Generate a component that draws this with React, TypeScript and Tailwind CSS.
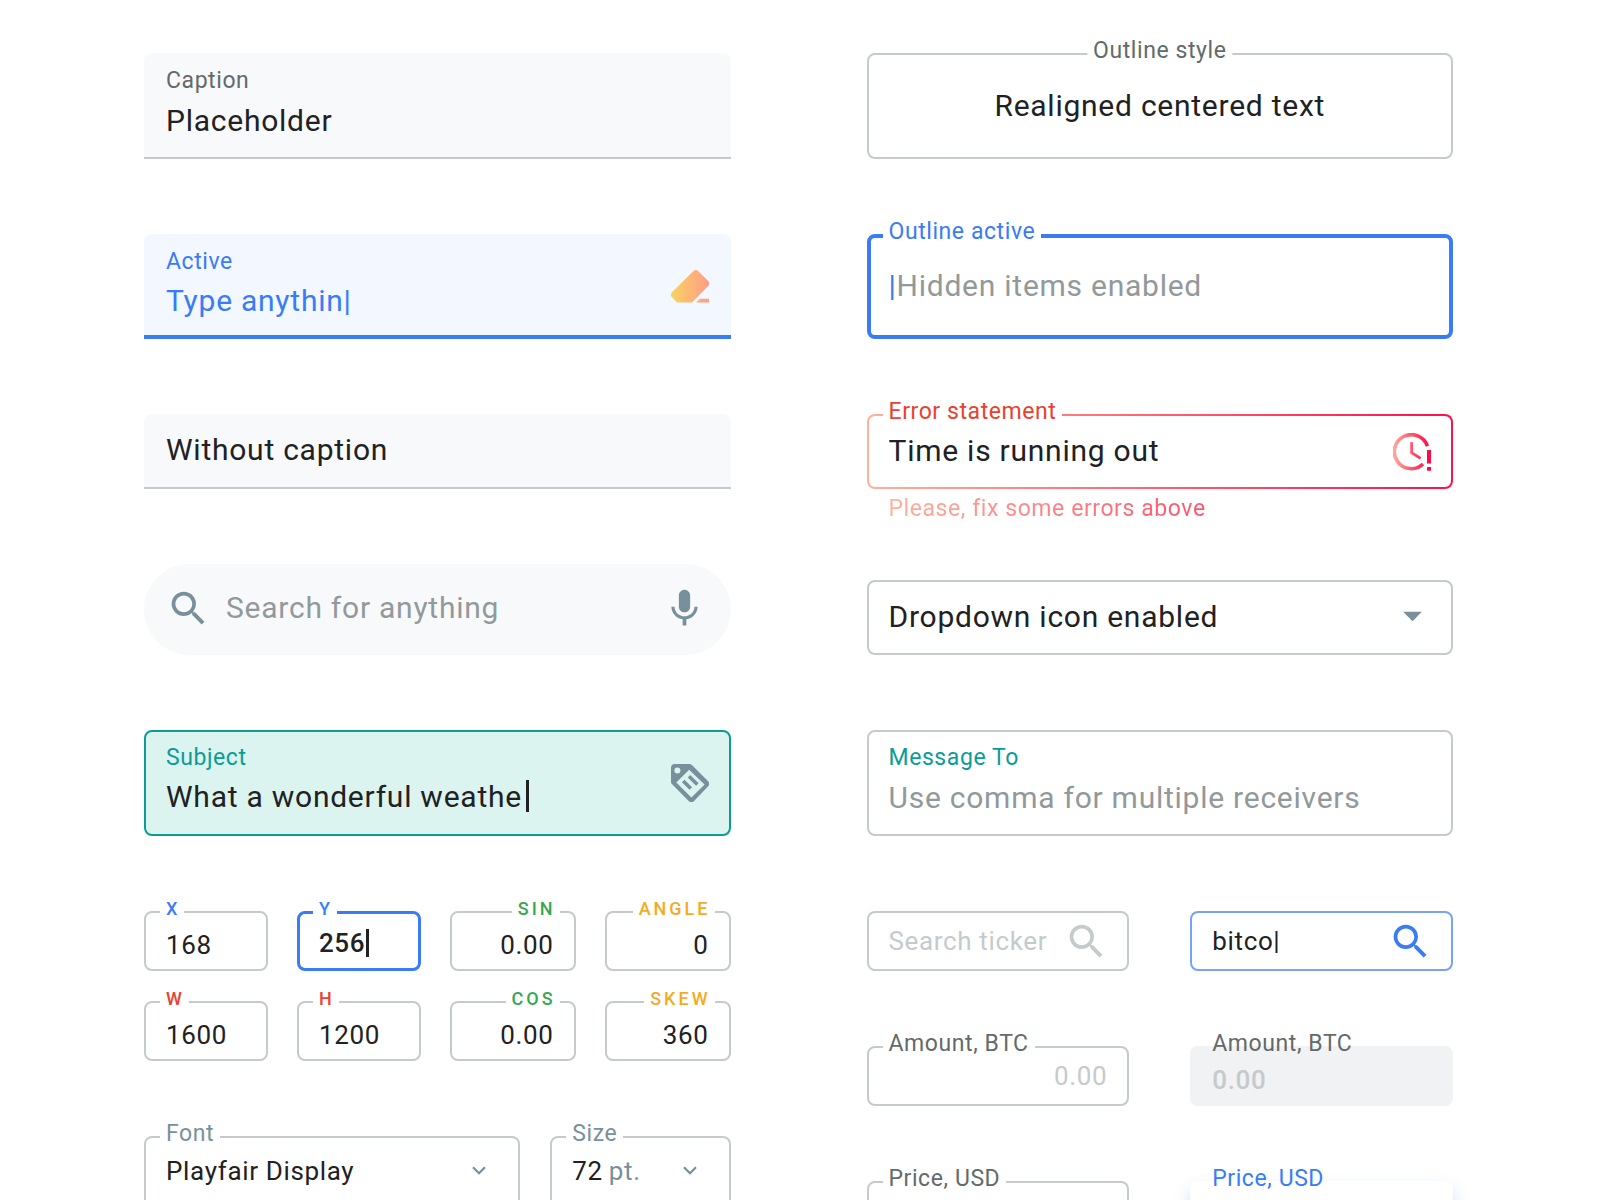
import React from 'react';
import clsx from 'clsx';
import { MdArrowDropDown, MdSearch } from 'react-icons/md';

type Tone = 'gray' | 'blue' | 'red' | 'green' | 'amber' | 'teal' | 'slate';

const toneClass: Record<Tone, string> = {
  gray: 'text-[#636a6b]',
  blue: 'text-[#397cf6]',
  red: 'text-[#ea4030]',
  green: 'text-[#34a853]',
  amber: 'text-[#f3ac1f]',
  teal: 'text-[#0b9c97]',
  slate: 'text-[#78909c]'
};

const largeInput =
  'h-10 w-full min-w-0 bg-transparent pb-0.5 text-[30px] leading-[38px] tracking-wide text-[#212123] outline-none placeholder:text-[#92999b] placeholder:opacity-100';
const smallInput =
  'h-8 w-full min-w-0 bg-transparent text-[26px] leading-8 tracking-wide text-[#212123] outline-none placeholder:text-[#c5cacd] placeholder:opacity-100';
const innerLabel = 'block text-[23px] leading-7 tracking-wide';
const outline = 'rounded-lg border-2 border-[#c5cacd]';

interface OutlineLabelProps {
  htmlFor: string;
  tone?: Tone;
  align?: 'left' | 'center' | 'right';
  small?: boolean;
  clear?: boolean;
  children: React.ReactNode;
}

// Sits on top of the border and hides the part of it behind the text
const OutlineLabel: React.FC<OutlineLabelProps> = ({ htmlFor, tone = 'gray', align = 'left', small, clear, children }) => (
  <label
    htmlFor={htmlFor}
    className={clsx(
      'absolute -top-3.5 z-10 pl-1.5 leading-6 whitespace-nowrap',
      small ? 'pr-1 text-lg font-medium tracking-[3px]' : 'pr-1.5 text-[23px] tracking-wide',
      align === 'left' && 'left-4',
      align === 'right' && 'right-4',
      align === 'center' && 'left-1/2 -translate-x-1/2',
      !clear && 'bg-white',
      toneClass[tone]
    )}
  >
    {children}
  </label>
);

const EraserIcon = () => (
  <svg viewBox="0 0 38 34" className="h-[34px] w-[38px] shrink-0">
    <defs>
      <linearGradient id="eraser" x1="0" y1="0" x2="1" y2="0">
        <stop offset="0" stopColor="#f9d35f" />
        <stop offset="1" stopColor="#ff9c89" />
      </linearGradient>
    </defs>
    <path
      fill="url(#eraser)"
      d="M22 1.4a4 4 0 0 1 5.6 0l9.3 9.3a4 4 0 0 1 0 5.6L21 32.6H6L1.2 27.6a4 4 0 0 1 0-5.6ZM29 28.8h9v3.8H25.2Z"
    />
  </svg>
);

const TagIcon = () => (
  <svg viewBox="0 0 38 38" className="size-[38px] shrink-0 text-[#78909c]">
    <path
      fill="currentColor"
      fillRule="evenodd"
      d="M3.8 0h14.4c1 0 2 .4 2.7 1.1l16 16a3.8 3.8 0 0 1 0 5.4L23.1 36.9a3.8 3.8 0 0 1-5.4 0L1.1 20.3A3.8 3.8 0 0 1 0 17.6V3.8A3.8 3.8 0 0 1 3.8 0ZM6.4 3.5a3 3 0 1 0 0 6 3 3 0 0 0 0-6ZM18.1 5.7 5.3 18.5l15.1 15.1 13.2-13.2Z"
    />
    <path stroke="currentColor" strokeWidth="3.6" d="m12.2 17 7.6 7.6M18 12.2l8.4 8.4" />
  </svg>
);

const ClockAlertIcon = () => (
  <svg viewBox="0 0 38 38" fill="none" className="size-[38px] shrink-0">
    <defs>
      <linearGradient id="clock" gradientUnits="userSpaceOnUse" x1="0" y1="0" x2="38" y2="0">
        <stop offset="0" stopColor="#ffab9b" />
        <stop offset="1" stopColor="#ff0040" />
      </linearGradient>
    </defs>
    <g stroke="url(#clock)">
      <path strokeWidth="3.6" d="M34.4 13.2A17 17 0 1 0 30 31" />
      <path strokeWidth="2.8" d="M18.6 9.2v10.6l9 5.6" />
    </g>
    <path fill="#ff0a47" d="M34 17h4v13.6h-4zM34 34h4v3.8h-4z" />
  </svg>
);

const Chevron = () => (
  <svg viewBox="0 0 14 9" fill="none" className="pointer-events-none h-[9px] w-3.5 shrink-0 text-[#78909c]">
    <path stroke="currentColor" strokeWidth="2.2" d="m1 1.2 6 6 6-6" />
  </svg>
);

interface NumberFieldProps {
  id: string;
  label: string;
  value: string;
  tone: Tone;
  align?: 'left' | 'right';
}

const NumberField: React.FC<NumberFieldProps> = ({ id, label, value, tone, align = 'left' }) => (
  <div className="relative">
    <OutlineLabel htmlFor={id} tone={tone} align={align} small>{label}</OutlineLabel>
    <div className={clsx(outline, 'flex h-15 items-center px-5 pt-2')}>
      <input id={id} defaultValue={value} className={clsx(smallInput, align === 'right' && 'text-right')} />
    </div>
  </div>
);

const App: React.FC = () => {
  return (
    <main className="h-screen overflow-hidden bg-white pt-[53px] pr-[147px] pl-36 font-[Roboto,sans-serif]">
      <div className="grid grid-cols-2 gap-x-[136px] gap-y-[75px]">
        <div className="h-[106px] rounded-t-lg border-b-2 border-[#c5c8cc] bg-[#f8f9fb] px-[22px] pt-3.5">
          <label htmlFor="caption" className={clsx(innerLabel, 'mb-1.5 text-[#636a6b]')}>Caption</label>
          <input id="caption" defaultValue="Placeholder" className={clsx(largeInput, 'block')} />
        </div>

        <div className="relative">
          <OutlineLabel htmlFor="outline-style" align="center">Outline style</OutlineLabel>
          <div className={clsx(outline, 'flex h-[106px] items-center px-5')}>
            <input id="outline-style" defaultValue="Realigned centered text" className={clsx(largeInput, 'text-center')} />
          </div>
        </div>

        <div className="flex h-[105px] items-center rounded-t-lg border-b-4 border-[#397cf6] bg-[#f3f7ff] px-[22px]">
          <div className="flex-1 self-start pt-3.5">
            <label htmlFor="active" className={clsx(innerLabel, 'mb-1 text-[#397cf6]')}>Active</label>
            <input
              id="active"
              defaultValue="Type anythin|"
              className="block h-10 w-full bg-transparent text-[30px] tracking-wide text-[#397cf6] outline-none"
            />
          </div>
          <button type="button" aria-label="Clear" className="mt-1"><EraserIcon /></button>
        </div>

        <div className="relative">
          <OutlineLabel htmlFor="outline-active" tone="blue">Outline active</OutlineLabel>
          <div className="flex h-[105px] items-center rounded-lg border-4 border-[#397cf6] px-[18px]">
            <span className="h-10 text-[30px] leading-[38px] tracking-wide text-[#397cf6]">|</span>
            <input id="outline-active" placeholder="Hidden items enabled" className={largeInput} />
          </div>
        </div>

        <div className="flex h-[75px] items-center rounded-t-lg border-b-2 border-[#c5c8cc] bg-[#f8f9fb] px-[22px]">
          <input aria-label="Without caption" defaultValue="Without caption" className={largeInput} />
        </div>

        <div className="relative">
          <OutlineLabel htmlFor="error" tone="red">Error statement</OutlineLabel>
          <div className="flex h-[75px] items-center rounded-lg border-2 border-transparent px-5 [background:linear-gradient(#fff,#fff)_padding-box,linear-gradient(90deg,#ffb19b,#ff0f4b)_border-box]">
            <input id="error" aria-describedby="error-help" defaultValue="Time is running out" className={largeInput} />
            <ClockAlertIcon />
          </div>
          <p
            id="error-help"
            className="absolute inset-x-[22px] top-full mt-1.5 bg-[linear-gradient(90deg,#ffb19b,#ff0f4b)] bg-clip-text text-[23px] leading-7 tracking-wide text-transparent"
          >
            Please, fix some errors above
          </p>
        </div>

        <div className="flex h-[91px] items-center gap-[15px] rounded-full bg-[#f8f9fb] pr-6 pb-0.5 pl-[22px] text-[#78909c]">
          <MdSearch className="size-[45px] shrink-0" />
          <input aria-label="Search" placeholder="Search for anything" className={largeInput} />
          <button type="button" aria-label="Voice search">
            <svg viewBox="0 0 24 24" fill="currentColor" className="size-[45px]">
              <path d="M12 14c1.66 0 3-1.34 3-3V5c0-1.66-1.34-3-3-3S9 3.34 9 5v6c0 1.66 1.34 3 3 3zm5.3-3c0 3-2.54 5.1-5.3 5.1S6.7 14 6.7 11H5c0 3.41 2.72 6.23 6 6.72V21h2v-3.28c3.28-.48 6-3.3 6-6.72h-1.7z" />
            </svg>
          </button>
        </div>

        <div className={clsx(outline, 'flex h-[75px] items-center self-end pr-4 pl-5')}>
          <select aria-label="Dropdown" className={clsx(largeInput, 'appearance-none')}>
            <option>Dropdown icon enabled</option>
          </select>
          <MdArrowDropDown className="pointer-events-none mb-1 size-[45px] shrink-0 text-[#78909c]" />
        </div>

        <div className="flex h-[106px] items-center rounded-lg border-2 border-[#0b9c97] bg-[#dbf4f0] px-5">
          <div className="flex-1 self-start pt-3">
            <label htmlFor="subject" className={clsx(innerLabel, 'mb-1 text-[#0b9c97]')}>Subject</label>
            <div className="flex items-center">
              <input
                id="subject"
                defaultValue="What a wonderful weathe"
                className="field-sizing-content h-10 bg-transparent text-[30px] tracking-wide text-[#212123] outline-none"
              />
              <span className="ml-1 h-8 w-[3px] bg-[#212123]" />
            </div>
          </div>
          <TagIcon />
        </div>

        <div className={clsx(outline, 'h-[106px] px-5 pt-3')}>
          <label htmlFor="message-to" className={clsx(innerLabel, 'mb-1.5 text-[#0b9c97]')}>Message To</label>
          <input id="message-to" placeholder="Use comma for multiple receivers" className={clsx(largeInput, 'block')} />
        </div>

        <div className="flex flex-col gap-[75px]">
          <div className="grid grid-cols-[124fr_124fr_126fr_126fr] gap-x-[29px] gap-y-[30px]">
            <NumberField id="x" label="X" value="168" tone="blue" />
            <div className="relative">
              <OutlineLabel htmlFor="y" tone="blue" small>Y</OutlineLabel>
              <div className="flex h-15 items-center rounded-lg border-3 border-[#397cf6] px-[19px] pt-1">
                <input
                  id="y"
                  defaultValue="256"
                  className="field-sizing-content h-8 bg-transparent text-[26px] font-medium tracking-wide text-[#212123] outline-none"
                />
                <span className="ml-px h-7 w-[3px] bg-[#212123]" />
              </div>
            </div>
            <NumberField id="sin" label="SIN" value="0.00" tone="green" align="right" />
            <NumberField id="angle" label="ANGLE" value="0" tone="amber" align="right" />
            <NumberField id="w" label="W" value="1600" tone="red" />
            <NumberField id="h" label="H" value="1200" tone="red" />
            <NumberField id="cos" label="COS" value="0.00" tone="green" align="right" />
            <NumberField id="skew" label="SKEW" value="360" tone="amber" align="right" />
          </div>

          <div className="grid grid-cols-[376fr_180fr] gap-[30px]">
            <div className="relative">
              <OutlineLabel htmlFor="font" tone="slate">Font</OutlineLabel>
              <div className={clsx(outline, 'flex h-[75px] items-center pr-8 pb-1.5 pl-5')}>
                <select id="font" className={clsx(smallInput, 'appearance-none')}>
                  <option>Playfair Display</option>
                </select>
                <Chevron />
              </div>
            </div>
            <div className="relative">
              <OutlineLabel htmlFor="size" tone="slate">Size</OutlineLabel>
              <div className={clsx(outline, 'flex h-[75px] items-center pr-8 pb-1.5 pl-5')}>
                <select
                  id="size"
                  className="field-sizing-content h-8 appearance-none bg-transparent text-[26px] leading-8 tracking-wide text-[#212123] outline-none"
                >
                  <option>72</option>
                </select>
                <span className="ml-1.5 flex-1 text-[26px] leading-8 tracking-wide text-[#78909c]">pt.</span>
                <Chevron />
              </div>
            </div>
          </div>
        </div>

        <div className="grid grid-cols-2 content-start gap-x-[61px] gap-y-[75px]">
          <div className={clsx(outline, 'flex h-15 items-center pr-[18px] pl-5')}>
            <input aria-label="Search ticker" placeholder="Search ticker" className={smallInput} />
            <MdSearch className="size-[45px] shrink-0 text-[#c5cacd]" />
          </div>
          <div className="flex h-15 items-center rounded-lg border-2 border-[#74a3f8] pr-[18px] pl-5">
            <input aria-label="Search ticker" defaultValue="bitco|" className={smallInput} />
            <MdSearch className="size-[45px] shrink-0 text-[#397cf6]" />
          </div>

          <div className="relative">
            <OutlineLabel htmlFor="amount">Amount, BTC</OutlineLabel>
            <div className={clsx(outline, 'flex h-15 items-center px-5')}>
              <input id="amount" placeholder="0.00" className={clsx(smallInput, 'text-right')} />
            </div>
          </div>
          <div className="relative">
            <OutlineLabel htmlFor="amount-disabled" clear>Amount, BTC</OutlineLabel>
            <div className="flex h-15 items-center rounded-lg bg-[#f1f2f4] px-[22px] pt-2">
              <input id="amount-disabled" placeholder="0.00" disabled className={clsx(smallInput, 'font-medium')} />
            </div>
          </div>

          <div className="relative">
            <OutlineLabel htmlFor="price">Price, USD</OutlineLabel>
            <div className={clsx(outline, 'flex h-15 items-center px-5')}>
              <input id="price" className={smallInput} />
            </div>
          </div>
          <div className="relative">
            <OutlineLabel htmlFor="price-active" tone="blue" clear>Price, USD</OutlineLabel>
            <div className="flex h-15 items-center rounded-lg bg-white px-[22px] shadow-[0_8px_16px_rgba(57,124,246,0.25)]">
              <input id="price-active" className={smallInput} />
            </div>
          </div>
        </div>
      </div>
    </main>
  );
};

export default App;
